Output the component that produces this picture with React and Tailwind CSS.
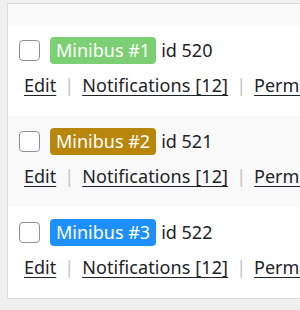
const rows = [
  { name: "Minibus #1", id: 520, color: "bg-[#7ccf72]", stripe: false },
  { name: "Minibus #2", id: 521, color: "bg-[#b8860b]", stripe: true },
  { name: "Minibus #3", id: 522, color: "bg-[#1e8fff]", stripe: false },
];

const Row = ({ name, id, color, stripe }) => {
  return (
    <div className={`${stripe ? "bg-[#f9f9f9]" : "bg-white"} h-[91px] pl-[11px] pt-[11px]`}>
      <div className="flex items-center h-[29px]">
        <span className="w-[21px] h-[21px] rounded-[4px] border border-[#8c8f94] bg-white shrink-0"></span>
        <span className={`${color} text-white rounded-[4px] ml-[10px] px-[6px] h-[27px] leading-[27px]`}>{name}</span>
        <span className="ml-[5px]">id {id}</span>
      </div>
      <div className="flex items-center whitespace-nowrap mt-[7px] pl-[5px] leading-[27px]">
        <a className="underline underline-offset-[3px]">Edit</a>
        <span className="text-[#c3c4c7] mx-[8px]">|</span>
        <a className="underline underline-offset-[3px] tracking-[0.1px]">Notifications [12]</a>
        <span className="text-[#c3c4c7] mx-[8px]">|</span>
        <a className="underline underline-offset-[3px]">Permalink</a>
      </div>
    </div>
  );
};

export default function App() {
  return (
    <div className="w-[300px] h-[310px] bg-[#f0f0f1] pt-[3px] pl-[7px] overflow-hidden text-[18px] text-[#1d2327]" style={{ fontFamily: '"Noto Sans", "Open Sans", sans-serif' }}>
      <div className="border border-r-0 border-[#dcdcde] bg-white w-[320px]">
        <div className="h-[21px] bg-[#f9f9f9]"></div>
        {rows.map((r) => (
          <Row key={r.id} {...r} />
        ))}
      </div>
    </div>
  );
}
